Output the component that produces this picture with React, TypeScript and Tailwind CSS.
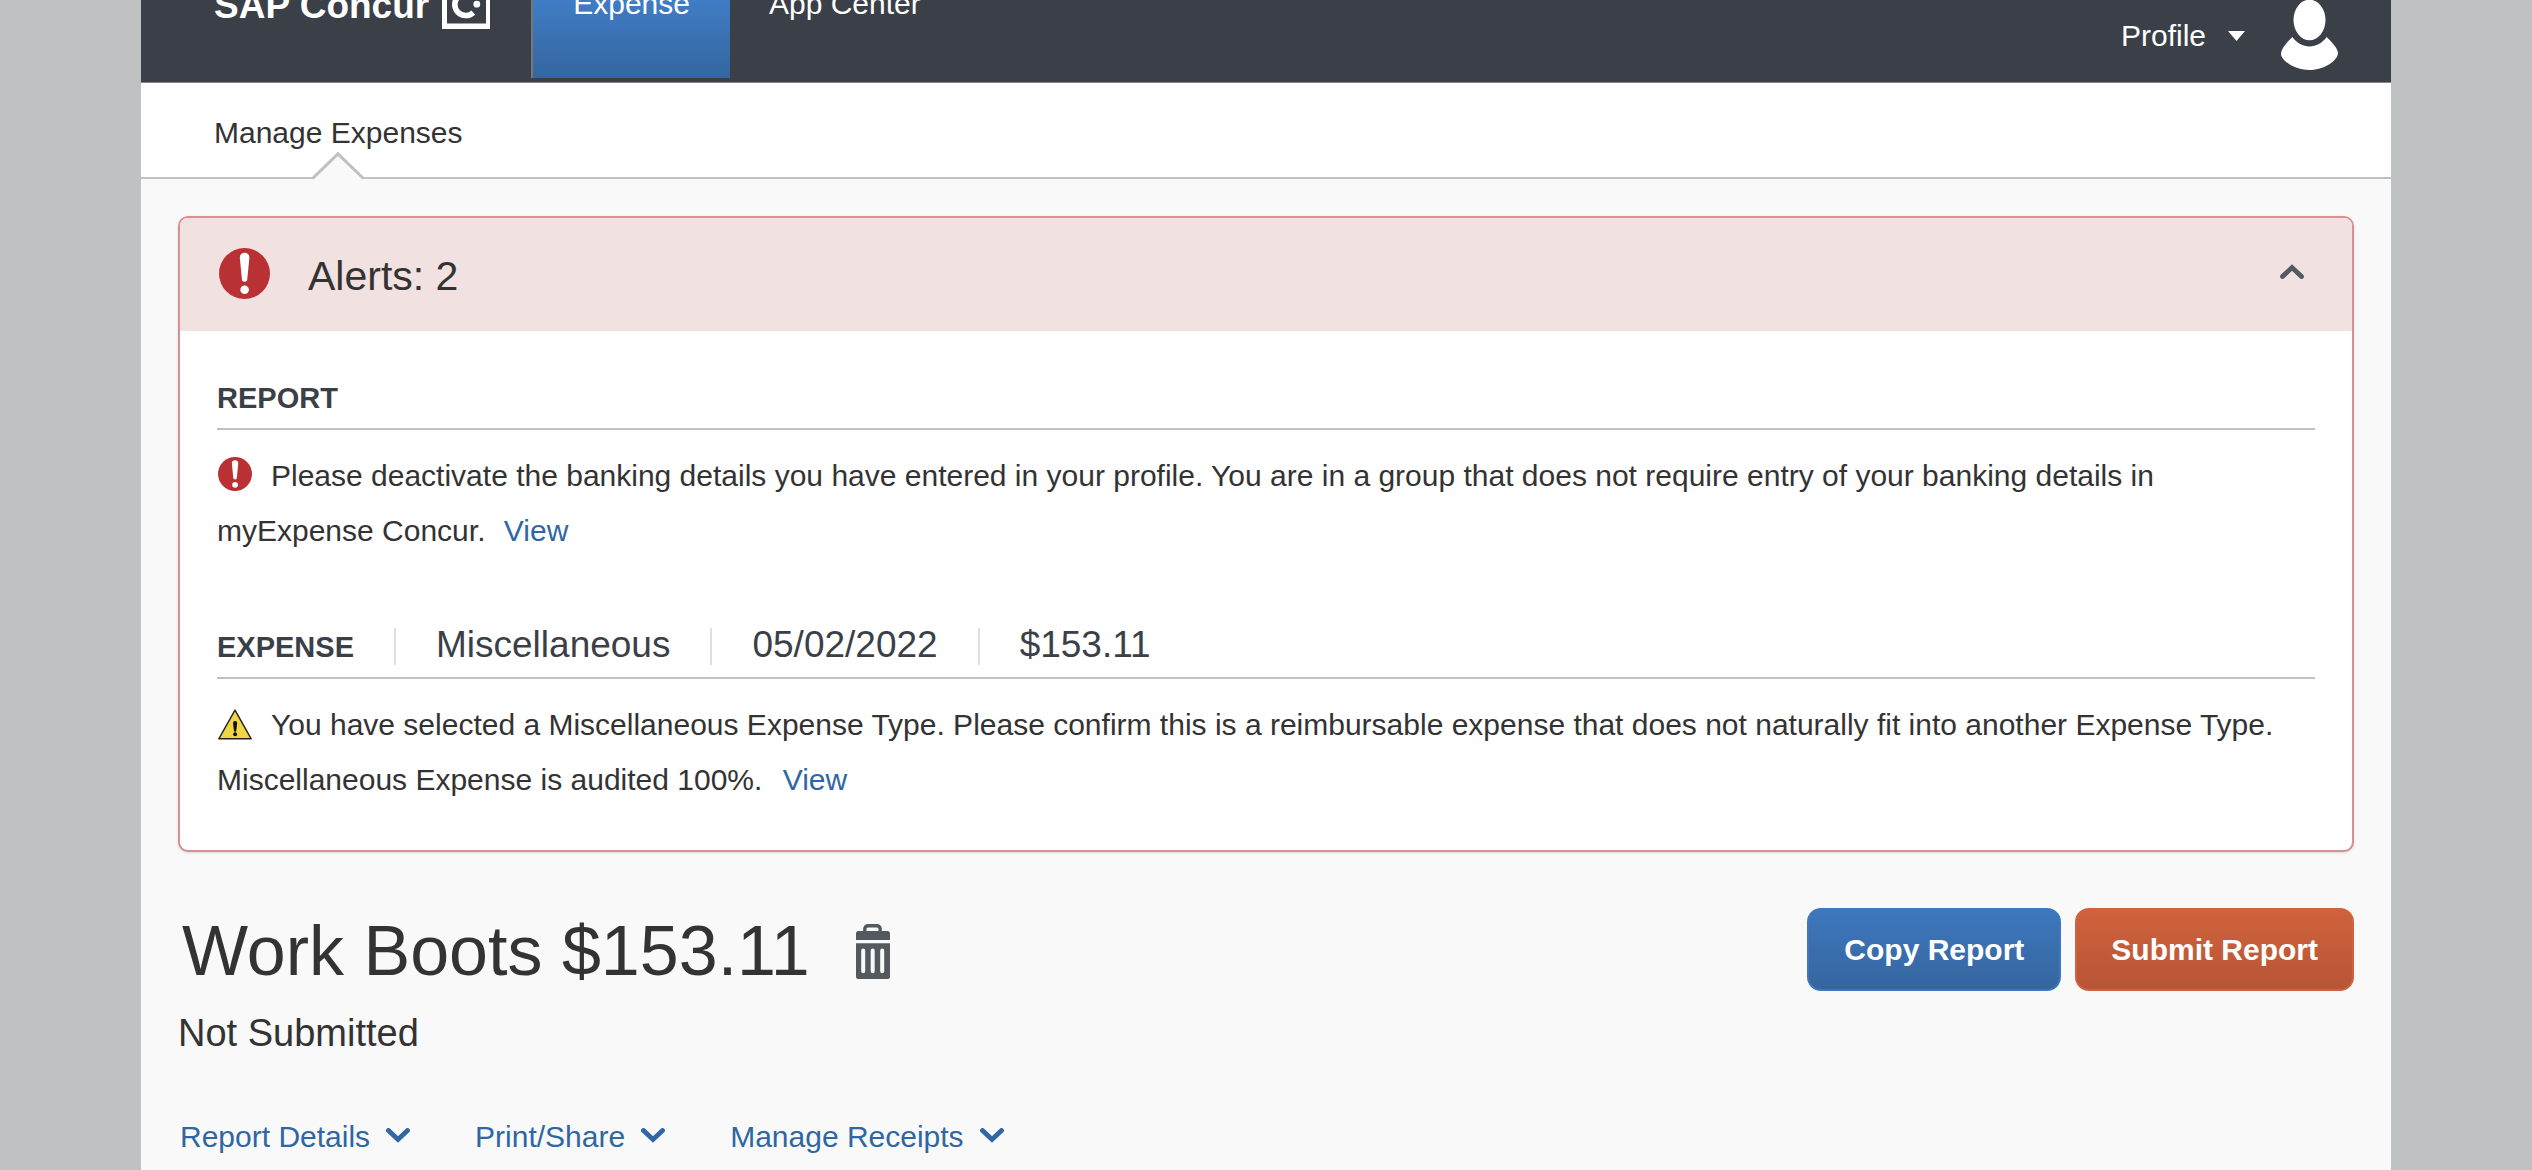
import React, { useState } from 'react';

interface MenuItem {
  id: string;
  label: string;
}

const reportMenus: MenuItem[] = [
  { id: 'details', label: 'Report Details' },
  { id: 'print', label: 'Print/Share' },
  { id: 'receipts', label: 'Manage Receipts' },
];

function Chevron({ className }: { className: string }) {
  return (
    <svg viewBox="0 0 24 15" className={className} fill="none" stroke="currentColor" strokeWidth="4.8" strokeLinecap="round" aria-hidden="true">
      <path d="M2.5 2.5 L12 11.4 L21.5 2.5" strokeLinejoin="miter" />
    </svg>
  );
}

function ErrorIcon({ className }: { className: string }) {
  return (
    <svg viewBox="0 0 51 51" className={className} aria-hidden="true">
      <circle cx="25.5" cy="25.5" r="25.5" fill="#b93134" />
      <path d="M20.8 9.5 a4.8 4.8 0 0 1 9.6 0 L28.3 31 a2.7 2.7 0 0 1 -5.4 0 Z" fill="#fff" />
      <circle cx="25.6" cy="41.8" r="4.3" fill="#fff" />
    </svg>
  );
}

function WarningIcon({ className }: { className: string }) {
  return (
    <svg viewBox="0 0 34 31" className={className} aria-hidden="true">
      <path d="M17 1.2 L33.2 29.8 H0.8 Z" fill="#f2d544" stroke="#222" strokeWidth="1.4" strokeLinejoin="round" />
      <path d="M15 14 a2.1 2.1 0 0 1 4.2 0 L18.3 21.5 a1.2 1.2 0 0 1 -2.4 0 Z" fill="#111" />
      <circle cx="17.1" cy="25.2" r="2" fill="#111" />
    </svg>
  );
}

function TrashIcon() {
  return (
    <svg viewBox="0 0 34 55" className="h-[55px] w-[34px]" aria-hidden="true">
      <path d="M8.8 8 V5 a3.2 3.2 0 0 1 3.2 -3.2 H21 a3.2 3.2 0 0 1 3.2 3.2 V8" fill="none" stroke="#525a60" strokeWidth="3.4" />
      <path d="M0 16 V9.5 a2.5 2.5 0 0 1 2.5 -2.5 H31.5 a2.5 2.5 0 0 1 2.5 2.5 V16 Z" fill="#525a60" />
      <path d="M0 19.2 H34 V52.5 a2.5 2.5 0 0 1 -2.5 2.5 H2.5 a2.5 2.5 0 0 1 -2.5 -2.5 Z" fill="#525a60" />
      <path d="M7.2 26.5 V47.2 M16.7 26.5 V47.2 M26.2 26.5 V47.2" stroke="#f9f9f9" strokeWidth="4" strokeLinecap="round" />
    </svg>
  );
}

function TopBar() {
  return (
    <header className="flex h-[83px] items-end justify-between overflow-hidden border-b border-[#85888b] bg-[#3b3f47] text-[30px] leading-10 text-white">
      <div className="flex items-end pl-[73px]">
        <div className="flex items-end gap-[13px] pb-[53px]">
          <span className="pb-[3px] text-[37px] leading-10 font-bold">SAP Concur</span>
          <svg viewBox="0 0 48 48" className="h-12 w-12" aria-hidden="true">
            <path d="M0 0 H48 V48 H0 Z M5 5 V42.5 H44 V5 Z" fill="#fff" fillRule="evenodd" />
            <path d="M31.3 15.5 A11 11 0 1 0 31.3 31.6" fill="none" stroke="#fff" strokeWidth="5.6" />
            <circle cx="34.8" cy="23.2" r="3.4" fill="#fff" />
          </svg>
        </div>
        <nav className="flex items-end pl-[41px]">
          <a href="#expense" className="mb-1 border-l-2 border-[#74777b] bg-linear-to-b from-[#4486d6] to-[#35669f] px-10 pt-4 pb-[54px]">
            Expense
          </a>
          <a href="#apps" className="px-[39px] pb-[58px]">App Center</a>
        </nav>
      </div>
      <button type="button" className="flex items-end gap-9 pr-[53px]">
        <span className="flex items-center gap-[22px] pb-[26px]">
          Profile
          <svg viewBox="0 0 17 10" className="h-[10px] w-[17px]" aria-hidden="true">
            <path d="M0 0 H17 L8.5 10 Z" fill="#fff" />
          </svg>
        </span>
        <svg viewBox="0 0 57 70" className="mb-3 h-[70px] w-[57px]" role="img" aria-label="User">
          <ellipse cx="28.5" cy="20" rx="16" ry="20.3" fill="#fff" />
          <path d="M11.4 37 C20 49.5 37 49.5 45.6 37 C52 43 57 49 57 53 C57 60 44 70 28.5 70 C13 70 0 60 0 54 C0 49 6 42 11.4 37 Z" fill="#fff" />
        </svg>
      </button>
    </header>
  );
}

function SubNav() {
  return (
    <nav className="flex border-b-2 border-[#c0c1c3] bg-white pl-[73px] text-[30px] leading-10">
      <a href="#manage" className="relative pt-[30px] pb-6">
        Manage Expenses
        <svg viewBox="0 0 54 28" className="absolute top-[69px] left-1/2 h-7 w-[54px] -translate-x-1/2" aria-hidden="true">
          <path d="M2 27 L27 2 L52 27 V28 H2 Z" fill="#f9f9f9" />
          <path d="M1.5 26.5 L27 1.8 L52.5 26.5" fill="none" stroke="#c0c1c3" strokeWidth="3" />
        </svg>
      </a>
    </nav>
  );
}

function Divider() {
  return <span className="h-[37px] w-[2px] self-center bg-[#dfdfe1]" />;
}

function Alerts() {
  const [open, setOpen] = useState(true);

  return (
    <section className="overflow-hidden rounded-[10px] border-2 border-[#d98f93] bg-white shadow-sm">
      <h2 className="bg-[#f2e1e1]">
        <button
          type="button"
          aria-expanded={open}
          onClick={() => setOpen(!open)}
          className="flex h-[113px] w-full items-center pr-12 pb-[2px] pl-[39px] text-[41px] leading-[50px]"
        >
          <ErrorIcon className="h-[51px] w-[51px]" />
          <span className="pt-1 pl-[38px]">Alerts: 2</span>
          <Chevron className={open ? 'mb-1 ml-auto h-[15px] w-6 rotate-180 text-[#525a60]' : 'mb-1 ml-auto h-[15px] w-6 text-[#525a60]'} />
        </button>
      </h2>

      {open && (
        <div className="px-[37px] pt-[42px] pb-[43px] text-[30px] leading-[55px]">
          {/* Report level */}
          <h3 className="border-b-2 border-[#c0c1c3] pb-[5px] text-[29px] leading-[50px] font-bold text-[#3b3f47]">REPORT</h3>
          <p className="pt-[18px]">
            <ErrorIcon className="mr-[19px] ml-px inline-block h-[34px] w-[34px] align-[-5px]" />
            Please deactivate the banking details you have entered in your profile. You are in a group that does not require entry of your banking details in myExpense Concur.{' '}
            <a href="#profile" className="ml-[10px] text-[#2f66a4]">View</a>
          </p>

          {/* Expense level */}
          <h3 className="mt-[62px] flex items-baseline gap-10 border-b-2 border-[#c0c1c3] pb-[5px] text-[37px] leading-[50px] text-[#3b3f47]">
            <span className="text-[29px] font-bold">EXPENSE</span>
            <Divider />
            <span>Miscellaneous</span>
            <Divider />
            <span>05/02/2022</span>
            <Divider />
            <span>$153.11</span>
          </h3>
          <p className="pt-[18px]">
            <WarningIcon className="mr-[19px] ml-px inline-block h-[31px] w-[34px] align-[-5px]" />
            You have selected a Miscellaneous Expense Type. Please confirm this is a reimbursable expense that does not naturally fit into another Expense Type. Miscellaneous Expense is audited 100%.{' '}
            <a href="#misc" className="ml-3 text-[#2f66a4]">View</a>
          </p>
        </div>
      )}
    </section>
  );
}

export default function App() {
  return (
    <div className="min-h-screen bg-[#c0c1c3] px-[141px] font-['Liberation_Sans',Arial,sans-serif] text-[#333333]">
      <div className="min-h-screen bg-[#f9f9f9]">
        <TopBar />
        <SubNav />
        <main className="px-[37px] pt-[37px] pb-3">
          <Alerts />

          {/* Report title and actions */}
          <div className="flex items-end justify-between pt-14">
            <div className="flex items-center gap-[46px] pl-1">
              <h1 className="text-[70px] leading-[80px]">Work Boots $153.11</h1>
              <button type="button" aria-label="Delete report">
                <TrashIcon />
              </button>
            </div>
            <div className="flex gap-[14px] text-[30px] font-bold text-white [text-shadow:0_2px_3px_rgba(0,0,0,0.5)]">
              <button type="button" className="h-[83px] rounded-[14px] border-2 border-[#3d78be] bg-linear-to-b from-[#3d78be] to-[#35659e] px-[35px]">
                Copy Report
              </button>
              <button type="button" className="h-[83px] rounded-[14px] border-2 border-[#d0623d] bg-linear-to-b from-[#d0623d] to-[#b75536] px-[34px]">
                Submit Report
              </button>
            </div>
          </div>
          <p className="pt-[17px] text-[38px] leading-[50px]">Not Submitted</p>

          <div className="flex gap-[65px] pt-[59px] pl-[2px] text-[30px] leading-10 text-[#2f66a4]">
            {reportMenus.map(menu => (
              <button key={menu.id} type="button" className="flex items-center gap-4">
                {menu.label}
                <Chevron className="mb-1 h-[15px] w-6" />
              </button>
            ))}
          </div>
        </main>
      </div>
    </div>
  );
}
